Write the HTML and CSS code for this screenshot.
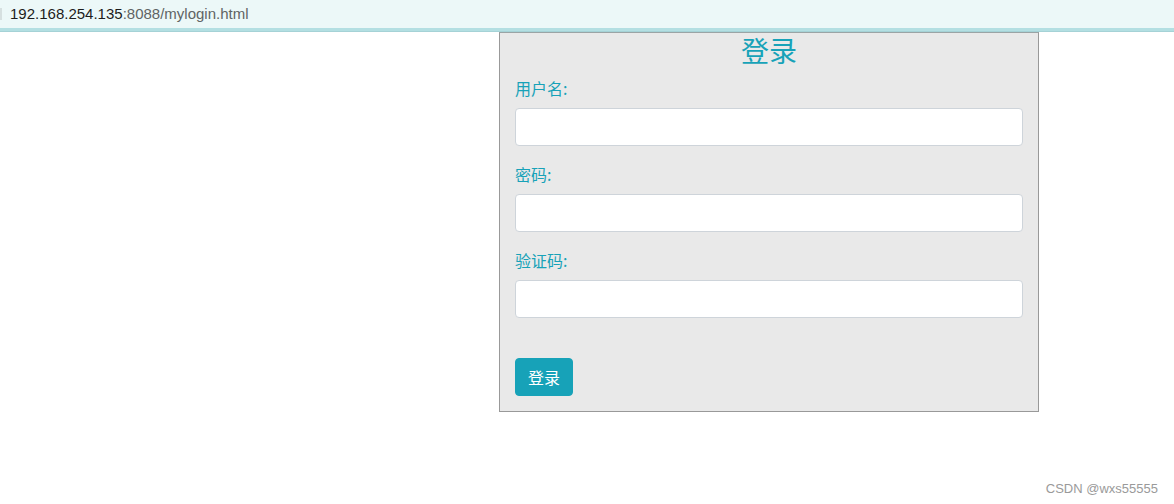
FILE: index.html
```html
<!DOCTYPE html>
<html lang="zh">
<head>
<meta charset="utf-8">
<title>mylogin</title>
<link rel="stylesheet" href="styles.css">
</head>
<body>
<div class="addr">
  <span class="edge"></span>
  <span class="host">192.168.254.135</span><span class="rest">:8088/mylogin.html</span>
</div>
<div class="addr-line"></div>
<main class="page">
  <form class="panel">
    <h3 class="title">登录</h3>
    <div class="group">
      <label class="label">用户名:</label>
      <input class="input" type="text">
    </div>
    <div class="group">
      <label class="label">密码:</label>
      <input class="input" type="password">
    </div>
    <div class="group">
      <label class="label">验证码:</label>
      <input class="input" type="text">
    </div>
    <button class="btn" type="button">登录</button>
  </form>
</main>
<div class="mark">CSDN @wxs55555</div>
</body>
</html>
```
FILE: styles.css
```css
* { box-sizing: border-box; }
html, body { margin: 0; padding: 0; background: #fff; }
body {
  width: 1174px;
  height: 504px;
  position: relative;
  overflow: hidden;
  font-family: "Noto Sans CJK SC", "Liberation Sans", sans-serif;
}
.addr {
  height: 28px;
  background: #ecf8f8;
  display: flex;
  align-items: center;
  padding-left: 10px;
  position: relative;
  font-family: "Liberation Sans", Arial, sans-serif;
  font-size: 15px;
  line-height: 28px;
}
.edge {
  position: absolute;
  left: 0;
  top: 8px;
  width: 2px;
  height: 12px;
  background: #d6e0e0;
}
.host { color: #1c1c1c; }
.rest { color: #5f6464; }
.addr-line {
  height: 4px;
  background: #b3dfe2;
  border-bottom: 1px solid #a5d2d6;
}
.page {
  padding-left: 499px;
}
.panel {
  width: 540px;
  margin-top: 0;
  background: #e9e9e9;
  border: 1px solid #999;
  border-top-color: #9aa4a5;
  padding: 0 15px 15px;
}
.title {
  margin: 0 0 8px;
  text-align: center;
  font-size: 28px;
  font-weight: 400;
  line-height: 35px;
  color: #17a2b8;
}
.group {
  margin-bottom: 16px;
}
.label {
  display: block;
  font-size: 16px;
  line-height: 24px;
  margin-bottom: 8px;
  color: #17a2b8;
}
.input {
  display: block;
  width: 100%;
  height: 38px;
  border: 1px solid #ced4da;
  border-radius: 4px;
  background: #fff;
  font-size: 16px;
  padding: 6px 12px;
}
.btn {
  display: block;
  margin-top: 40px;
  height: 38px;
  padding: 0 12px;
  border: 1px solid #17a2b8;
  border-radius: 4px;
  background: #17a2b8;
  color: #fff;
  font-family: "Noto Sans CJK SC", sans-serif;
  font-size: 16px;
  line-height: 24px;
}
.mark {
  position: absolute;
  right: 16px;
  bottom: 8px;
  font-family: "Liberation Sans", Arial, sans-serif;
  font-size: 13px;
  color: #9a9a9a;
}
```
